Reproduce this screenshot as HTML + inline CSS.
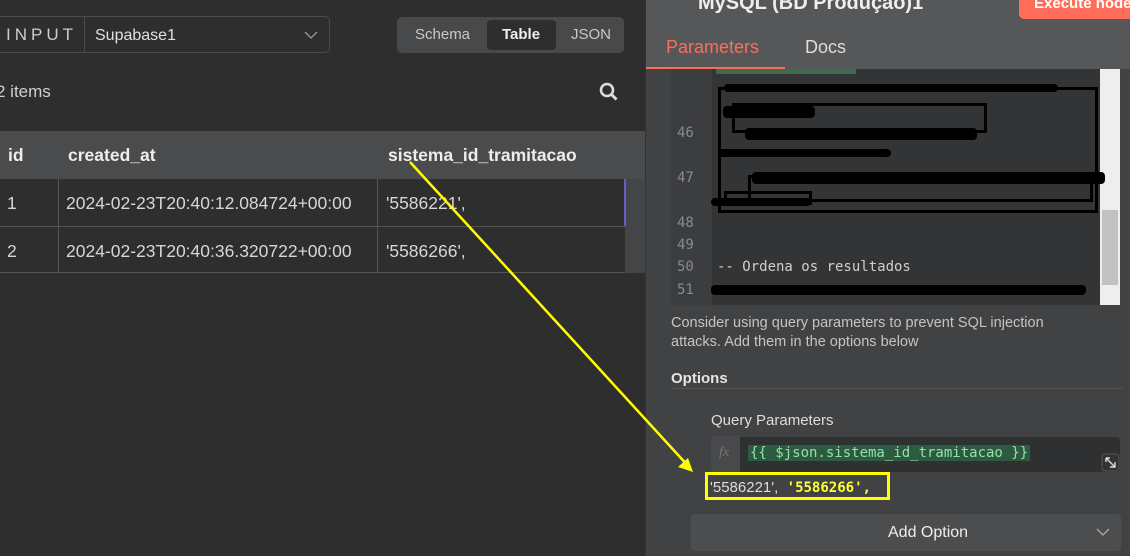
<!DOCTYPE html>
<html><head><meta charset="utf-8"><style>
*{margin:0;padding:0;box-sizing:border-box}
body{width:1130px;height:556px;overflow:hidden;background:#2e2e2f;font-family:"Liberation Sans",sans-serif;position:relative;color:#ddd}
.a{position:absolute;white-space:nowrap}
.cell{position:absolute;font-size:17.5px;color:#d6d6d6;white-space:nowrap}
.mono{font-family:"DejaVu Sans Mono","Liberation Mono",monospace}
.blk{position:absolute;border:3px solid #000}
.bar{position:absolute;background:#000;border-radius:4px}
.ln{position:absolute;left:677px;font-size:14px;color:#888a8c;font-family:"DejaVu Sans Mono",monospace}
</style></head><body>
<div class="a" style="left:-5px;top:16px;width:335px;height:37px;border:1px solid #4a4b4c;border-radius:5px"></div>
<div class="a" style="left:84px;top:17px;width:1px;height:35px;background:#4a4b4c"></div>
<div class="a" style="left:6px;top:25px;font-size:17px;letter-spacing:4px;color:#ccc">INPUT</div>
<div class="a" style="left:95px;top:27px;font-size:16px;color:#e0e0e0">Supabase1</div>
<svg class="a" style="left:304px;top:30px" width="14" height="10"><path d="M1 2l6 6 6-6" stroke="#999" fill="none" stroke-width="1.3"/></svg>
<div class="a" style="left:397px;top:17px;width:227px;height:36px;background:#48494b;border-radius:5px"></div>
<div class="a" style="left:487px;top:20px;width:69px;height:30px;background:#2e2e2f;border-radius:4px"></div>
<div class="a" style="left:415px;top:26px;font-size:15px;color:#c8c8c8">Schema</div>
<div class="a" style="left:502px;top:26px;font-size:15px;color:#eee;font-weight:bold">Table</div>
<div class="a" style="left:571px;top:26px;font-size:15px;color:#c8c8c8">JSON</div>
<div class="a" style="left:-4px;top:82px;font-size:17px;color:#d0d0d0">2 items</div>
<svg class="a" style="left:599px;top:82px" width="20" height="20"><circle cx="8" cy="8" r="6" stroke="#ddd" stroke-width="2.6" fill="none"/><path d="M12.5 12.5l5 5" stroke="#ddd" stroke-width="3"/></svg>
<div class="a" style="left:0;top:131px;width:645px;height:48px;background:#4a4b4d"></div>
<div class="a" style="left:625px;top:179px;width:20px;height:94px;background:#444547"></div>
<div class="a" style="left:0;top:179px;width:625px;height:94px;border-bottom:1px solid #555"></div>
<div class="a" style="left:0;top:226px;width:625px;height:1px;background:#555"></div>
<div class="a" style="left:58px;top:179px;width:1px;height:94px;background:#555"></div>
<div class="a" style="left:377px;top:179px;width:1px;height:94px;background:#555"></div>
<div class="a" style="left:624px;top:179px;width:2px;height:47px;background:#6a5acd"></div>
<div class="cell" style="left:8px;top:145px;font-weight:bold;color:#eee">id</div>
<div class="cell" style="left:68px;top:145px;font-weight:bold;color:#eee">created_at</div>
<div class="cell" style="left:388px;top:145px;font-weight:bold;color:#eee">sistema_id_tramitacao</div>
<div class="cell" style="left:7px;top:193px">1</div>
<div class="cell" style="left:66px;top:193px">2024-02-23T20:40:12.084724+00:00</div>
<div class="cell" style="left:386px;top:193px">'5586221',</div>
<div class="cell" style="left:7px;top:241px">2</div>
<div class="cell" style="left:66px;top:241px">2024-02-23T20:40:36.320722+00:00</div>
<div class="cell" style="left:386px;top:241px">'5586266',</div>
<div class="a" style="left:645px;top:0;width:485px;height:556px;background:#414244;border-left:1px solid #333"></div>
<div class="a" style="left:646px;top:0;width:484px;height:69px;background:#565759"></div>
<div class="a" style="left:698px;top:-8px;font-size:20px;color:#eee;font-weight:bold">MySQL (BD Produção)1</div>
<div class="a" style="left:1019px;top:-6px;width:120px;height:25px;background:#ff6d5a;border-radius:5px"></div>
<div class="a" style="left:1034px;top:-5px;font-size:15px;color:#fff;font-weight:bold">Execute node</div>
<div class="a" style="left:666px;top:37px;font-size:18px;color:#ff6d5a">Parameters</div>
<div class="a" style="left:805px;top:37px;font-size:18px;color:#ddd">Docs</div>
<div class="a" style="left:646px;top:67px;width:139px;height:2px;background:#ff6d5a"></div>
<div class="a" style="left:671px;top:69px;width:449px;height:236px;background:#333436;border-radius:0 0 4px 4px"></div>
<div class="a" style="left:671px;top:69px;width:41px;height:236px;background:#3c3d3f"></div>
<div class="a" style="left:1100px;top:69px;width:20px;height:236px;background:#eeeeee"></div>
<div class="a" style="left:1102px;top:210px;width:16px;height:75px;background:#c1c1c1"></div>
<div class="ln" style="top:125px">46</div><div class="ln" style="top:170px">47</div>
<div class="ln" style="top:215px">48</div><div class="ln" style="top:237px">49</div>
<div class="ln" style="top:259px">50</div><div class="ln" style="top:282px">51</div>
<div class="a" style="left:716px;top:69px;width:140px;height:5px;background:#3d6b50"></div>
<div class="blk" style="left:718px;top:87px;width:380px;height:126px"></div>
<div class="bar" style="left:724px;top:84px;width:334px;height:8px"></div>
<div class="blk" style="left:732px;top:103px;width:255px;height:30px"></div>
<div class="bar" style="left:723px;top:106px;width:92px;height:12px"></div>
<div class="bar" style="left:745px;top:128px;width:232px;height:12px"></div>
<div class="bar" style="left:718px;top:149px;width:173px;height:8px"></div>
<div class="bar" style="left:752px;top:172px;width:353px;height:12px"></div>
<div class="blk" style="left:748px;top:175px;width:345px;height:27px"></div>
<div class="blk" style="left:724px;top:191px;width:88px;height:14px"></div>
<div class="bar" style="left:711px;top:198px;width:100px;height:8px"></div>
<div class="a mono" style="left:717px;top:259px;font-size:14px;color:#cfcfcf">-- Ordena os resultados</div>
<div class="bar" style="left:711px;top:285px;width:375px;height:10px"></div>
<div class="a" style="left:671px;top:314px;font-size:14.5px;color:#c4c4c4;line-height:19px;width:410px;white-space:normal">Consider using query parameters to prevent SQL injection attacks. Add them in the options below</div>
<div class="a" style="left:671px;top:370px;font-size:15px;color:#e6e6e6;font-weight:bold">Options</div>
<div class="a" style="left:671px;top:388px;width:452px;height:1px;background:#555"></div>
<div class="a" style="left:711px;top:412px;font-size:15px;color:#ddd">Query Parameters</div>
<div class="a" style="left:711px;top:436px;width:410px;height:37px;background:#2f3032;border-radius:4px;border:1px solid #444"></div>
<div class="a" style="left:711px;top:436px;width:29px;height:37px;background:#48494b;border-radius:4px 0 0 4px"></div>
<div class="a" style="left:719px;top:445px;font-size:14px;color:#777;font-style:italic;font-family:'Liberation Serif',serif">fx</div>
<div class="a mono" style="left:748px;top:445px;font-size:14px;color:#8fe3a6;background:#2f5a42;padding:0 2px">{{ $json.sistema_id_tramitacao }}</div>
<svg class="a" style="left:1101px;top:453px" width="20" height="20"><rect x="1" y="1" width="17" height="17" rx="3" fill="#333" stroke="#555"/><path d="M5 5l9 9M14 9v5h-5M5 5h4M5 5v4" stroke="#ddd" stroke-width="1.4" fill="none"/></svg>
<div class="a" style="left:705px;top:472px;width:185px;height:28px;border:3px solid #ffff00"></div>
<div class="a" style="left:710px;top:479px;font-size:15px;color:#ddd">'5586221',&nbsp; <span class="mono" style="color:#ffff33;font-weight:bold;font-size:14px">'5586266',</span></div>
<div class="a" style="left:691px;top:514px;width:430px;height:37px;background:#4c4d4f;border-radius:4px"></div>
<div class="a" style="left:888px;top:524px;font-size:16px;color:#eee">Add Option</div>
<svg class="a" style="left:1096px;top:527px" width="14" height="10"><path d="M1 2l6 6 6-6" stroke="#aaa" fill="none" stroke-width="1.3"/></svg>
<svg class="a" style="left:0;top:0" width="1130" height="556"><path d="M410 162L690 468" stroke="#ffff00" stroke-width="2.5"/><path d="M693 472l-15-5 10-9z" fill="#ffff00"/></svg>
</body></html>
